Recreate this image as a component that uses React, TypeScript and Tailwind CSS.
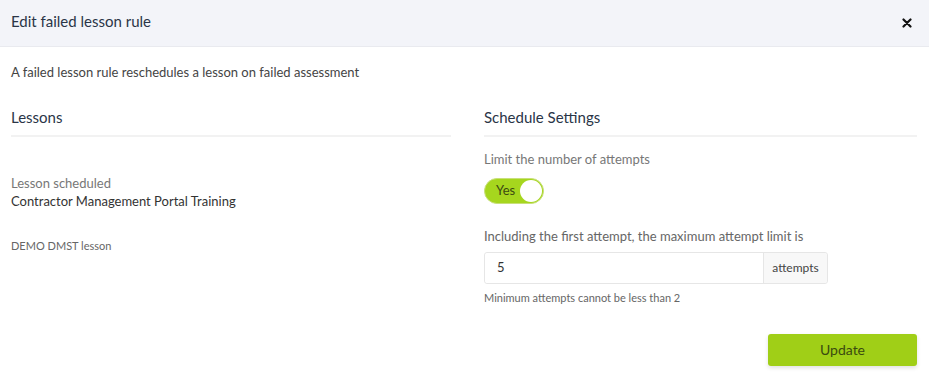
import { useState } from "react";

const font = { fontFamily: "Lato, 'Open Sans', sans-serif" };

function Toggle({ on, onChange }: { on: boolean; onChange: (v: boolean) => void }) {
  return (
    <button
      type="button"
      onClick={() => onChange(!on)}
      className={`relative flex items-center w-[60px] h-[26px] rounded-full border border-[#c8e07a] ${
        on ? "bg-[#a6d61e]" : "bg-gray-200"
      }`}
    >
      <span className="pl-[11px] text-[13px] text-[#3d4a12]">{on ? "Yes" : "No"}</span>
      <span
        className={`absolute top-[1px] w-[22px] h-[22px] rounded-full bg-white ${
          on ? "right-[1px]" : "left-[1px]"
        }`}
      />
    </button>
  );
}

export default function App() {
  const [limit, setLimit] = useState(true);
  const [attempts, setAttempts] = useState("5");

  return (
    <div className="w-[929px] h-[380px] bg-white overflow-hidden" style={font}>
      <div className="h-[47px] bg-[#f3f4f9] border-b border-[#e9eaef] flex items-center justify-between pl-[11px] pr-[17px] pb-[3px]">
        <h1 className="text-[15px] text-[#2a3547]">Edit failed lesson rule</h1>
        <button type="button" className="text-[#111] mt-[3px]">
          <svg width="10" height="10" viewBox="0 0 10 10">
            <path d="M1.5 1.5l7 7M8.5 1.5l-7 7" stroke="currentColor" strokeWidth="2.2" strokeLinecap="round" />
          </svg>
        </button>
      </div>

      <div className="pl-[11px] pr-[12px]">
        <p className="mt-[16px] text-[13px] text-[#444]">
          A failed lesson rule reschedules a lesson on failed assessment
        </p>

        <div className="mt-[23px] grid grid-cols-[440px_1fr] gap-x-[33px]">
          <div>
            <h2 className="text-[15px] text-[#2a3547] pb-[7px] border-b-2 border-[#f2f2f2]">Lessons</h2>
            <div className="mt-[37px] text-[13px] leading-[18px]">
              <div className="text-[#777]">Lesson scheduled</div>
              <div className="text-[#333]">Contractor Management Portal Training</div>
            </div>
            <div className="mt-[28px] text-[11px] text-[#666]">DEMO DMST lesson</div>
          </div>

          <div>
            <h2 className="text-[15px] text-[#2a3547] pb-[7px] border-b-2 border-[#f2f2f2]">Schedule Settings</h2>
            <div className="mt-[13px] text-[13px] text-[#777]">Limit the number of attempts</div>
            <div className="mt-[8px]">
              <Toggle on={limit} onChange={setLimit} />
            </div>
            <div className="mt-[23px] text-[13px] text-[#666]">
              Including the first attempt, the maximum attempt limit is
            </div>
            <div className="mt-[6px] flex w-[344px] h-[32px] border border-[#e6e6e6] rounded-[3px]">
              <input
                value={attempts}
                onChange={(e) => setAttempts(e.target.value)}
                className="flex-1 min-w-0 px-[12px] text-[13px] text-[#333] outline-none bg-white rounded-l-[3px]"
              />
              <span className="w-[64px] flex items-center justify-center bg-[#f8f8f8] border-l border-[#e6e6e6] text-[12px] text-[#444] rounded-r-[3px]">
                attempts
              </span>
            </div>
            <div className="mt-[6px] text-[11px] text-[#666]">Minimum attempts cannot be less than 2</div>
            <div className="mt-[27px] flex justify-end">
              <button
                type="button"
                className="w-[149px] h-[32px] rounded-[3px] bg-[#a0cf17] text-[14px] text-[#3a4a10] shadow-[0_2px_4px_rgba(0,0,0,0.12)]"
              >
                Update
              </button>
            </div>
          </div>
        </div>
      </div>
    </div>
  );
}
